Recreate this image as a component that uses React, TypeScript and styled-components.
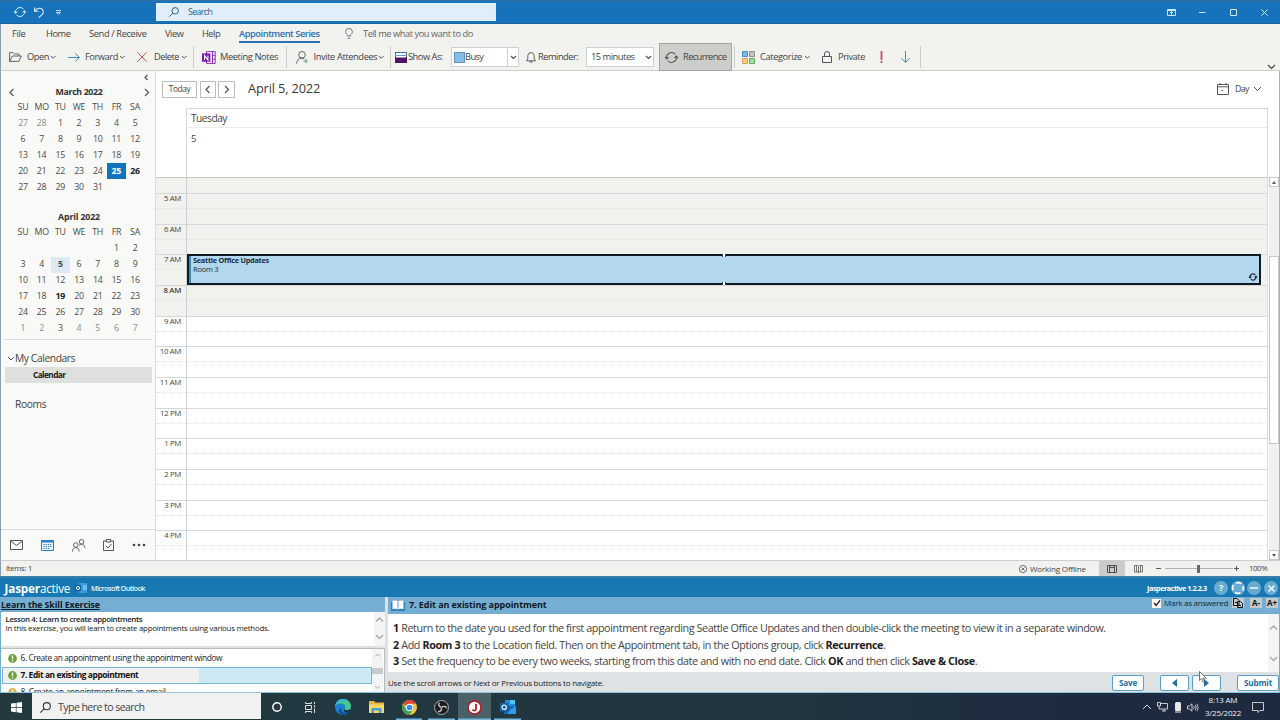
import React from "react";
import styled, { createGlobalStyle } from "styled-components";

const Global = createGlobalStyle`
  * { box-sizing: border-box; }
  html, body { margin: 0; padding: 0; }
  body { width: 1280px; height: 720px; overflow: hidden; font-family: "Open Sans", "Noto Sans", sans-serif; font-size: 9.3px; color: #444; }
`;

const Screen = styled.div`
  position: relative;
  display: flex;
  flex-direction: column;
  width: 1280px;
  height: 720px;
  background: #fff;
  overflow: hidden;
`;

const Txt = styled.span<{ $s?: number; $c?: string; $b?: number; $ls?: number; $w?: number }>`
  flex: none;
  white-space: nowrap;
  line-height: 1.2;
  font-size: ${(p) => p.$s ?? 9.3}px;
  color: ${(p) => p.$c ?? "#444"};
  font-weight: ${(p) => p.$b ?? 400};
  letter-spacing: ${(p) => p.$ls ?? 0}px;
  width: ${(p) => (p.$w ? p.$w + "px" : "auto")};
`;

const Spacer = styled.div<{ $w?: number }>`
  flex: ${(p) => (p.$w ? `0 0 ${p.$w}px` : "1 1 0")};
`;

const Svg = styled.svg`
  flex: none;
  display: block;
  fill: none;
  overflow: visible;
`;

/* Outlook title bar */
const TitleBar = styled.header`
  display: flex;
  align-items: center;
  height: 24px;
  flex: none;
  background: #1673bb;
  border-top: 1px solid #35719f;
  border-bottom: 1px solid #1c629c;
  padding-left: 14px;
`;
const SearchBox = styled.div`
  display: flex;
  align-items: center;
  width: 340px;
  height: 18px;
  padding-left: 13px;
  gap: 9px;
  background: #dfeef8;
`;

/* Ribbon */
const Ribbon = styled.div`
  flex: none;
  height: 47px;
  background: #f2f2ef;
  border-bottom: 1px solid #cfcfcf;
  border-left: 1px solid #8a9eae;
`;
const Tabs = styled.nav`
  display: flex;
  align-items: center;
  height: 19px;
  padding-left: 11px;
`;
const Tab = styled.div<{ $w: number }>`
  width: ${(p) => p.$w}px;
  flex: none;
  display: flex;
`;
const ActiveLabel = styled.div`
  width: 81px;
  height: 16px;
  margin-top: 2px;
  border-bottom: 2px solid #2a71b2;
`;
const Tools = styled.div`
  display: flex;
  align-items: center;
  height: 28px;
  padding-left: 8px;
`;
const Tool = styled.div<{ $w: number }>`
  display: flex;
  align-items: center;
  flex: none;
  width: ${(p) => p.$w}px;
`;
const IconSlot = styled.div<{ $w: number }>`
  flex: none;
  width: ${(p) => p.$w}px;
`;
const Divider = styled.div<{ $m: number }>`
  flex: none;
  width: 1px;
  height: 22px;
  background: #cbcbca;
  margin-right: ${(p) => p.$m}px;
`;
const Select = styled.div<{ $w: number; $split?: boolean }>`
  display: flex;
  align-items: center;
  flex: none;
  width: ${(p) => p.$w}px;
  height: 20px;
  padding-left: ${(p) => (p.$split ? 2 : 4)}px;
  background: #fff;
  border: 1px solid #cfcfcf;
`;
const SelectArrow = styled.div<{ $line?: boolean }>`
  display: flex;
  align-items: center;
  justify-content: center;
  width: 11px;
  height: 100%;
  margin-left: auto;
  border-left: 1px solid ${(p) => (p.$line ? "#cfcfcf" : "transparent")};
`;
const Swatch = styled.div`
  width: 11px;
  height: 11px;
  background: #84bce6;
  border: 1px solid #5f95bd;
`;
const Pressed = styled.div`
  display: flex;
  align-items: center;
  flex: none;
  width: 73px;
  height: 28px;
  padding-left: 5px;
  margin: 0 2px 0 5px;
  background: #cdcdc9;
  border: 1px solid #a3a3a0;
`;
const RibbonToggle = styled.div`
  align-self: flex-end;
  padding: 0 5px 3px 0;
`;

/* Main area */
const Main = styled.div`
  display: flex;
  flex: none;
  height: 489px;
`;
const Sidebar = styled.aside`
  display: flex;
  flex-direction: column;
  flex: none;
  width: 156px;
  background: #f9f9f7;
  border-left: 1px solid #8a9eae;
  border-right: 1px solid #dcdcdc;
`;
const CollapseRow = styled.div`
  display: flex;
  align-items: center;
  justify-content: flex-end;
  flex: none;
  height: 14px;
  padding: 0 8px 2px 0;
`;
const MonthHead = styled.div<{ $top: number }>`
  display: flex;
  align-items: center;
  justify-content: space-between;
  height: 14px;
  margin-top: ${(p) => p.$top}px;
  padding: 0 7px 0 9px;
`;
const MonthGrid = styled.div`
  display: grid;
  grid-template-columns: repeat(7, 18.7px);
  grid-template-rows: 16px;
  grid-auto-rows: 16px;
  margin-left: 12.6px;
`;
const DayCell = styled.div<{ $k?: string }>`
  display: flex;
  align-items: center;
  justify-content: center;
  font-size: 8.8px;
  letter-spacing: -0.25px;
  line-height: 1;
  color: ${(p) => (p.$k === "sel" ? "#fff" : p.$k === "dim" ? "#8b8b8b" : p.$k === "bold" ? "#222" : "#4a4a4a")};
  font-weight: ${(p) => (p.$k === "sel" || p.$k === "bold" || p.$k === "cur" ? 700 : 400)};
  background: ${(p) => (p.$k === "sel" ? "#0f74bb" : p.$k === "cur" ? "#dceaf6" : "transparent")};
`;
const SideRule = styled.div`
  height: 1px;
  background: #dadada;
  margin: 2px 3px 0 3px;
`;
const SideRow = styled.div<{ $top: number; $h: number; $pl: number; $on?: boolean }>`
  display: flex;
  align-items: center;
  flex: none;
  gap: 1px;
  height: ${(p) => p.$h}px;
  margin: ${(p) => p.$top}px 3px 0 4px;
  padding-left: ${(p) => p.$pl}px;
  background: ${(p) => (p.$on ? "#dfdfde" : "transparent")};
`;
const SideNav = styled.div`
  display: flex;
  align-items: center;
  gap: 18px;
  height: 31px;
  margin-top: auto;
  padding-left: 8.5px;
  border-top: 1px solid #d9d9d9;
`;

const Calendar = styled.section`
  display: flex;
  flex-direction: column;
  flex: 1;
  border-right: 1px solid #a7b4be;
`;
const CalHead = styled.div`
  display: flex;
  align-items: center;
  flex: none;
  height: 37px;
  padding: 0 18px 1px 6px;
`;
const Btn = styled.div<{ $w: number; $m: number }>`
  display: flex;
  align-items: center;
  justify-content: center;
  flex: none;
  width: ${(p) => p.$w}px;
  height: 17px;
  margin-right: ${(p) => p.$m}px;
  background: #fff;
  border: 1px solid #bdbdbd;
`;
const DayHeader = styled.div`
  flex: none;
  height: 69px;
  margin-left: 30px;
  margin-right: 11px;
  border: 1px solid #d6d6d6;
  border-bottom: none;
`;
const DayName = styled.div`
  display: flex;
  align-items: center;
  height: 19px;
  padding-left: 4px;
  border-bottom: 1px solid #ececec;
`;
const DayNumber = styled.div`
  display: flex;
  align-items: center;
  height: 22px;
  padding-left: 4px;
`;
const Schedule = styled.div`
  display: flex;
  flex: none;
  height: 383px;
`;
const Slots = styled.div`
  position: relative;
  flex: none;
  width: 1112px;
  overflow: hidden;
  border-top: 1px solid #c4c4c4;
  border-right: 1px solid #dcdcdc;
`;
const Slot = styled.div<{ $off?: boolean; $h: number }>`
  display: grid;
  grid-template-columns: 31px 1fr;
  height: ${(p) => p.$h}px;
  background: ${(p) => (p.$off ? "#f1f1ee" : "#fff")};
`;
const SlotCell = styled.div<{ $left?: boolean; $first?: boolean }>`
  display: flex;
  flex-direction: column;
  border-top: ${(p) => (p.$first ? "none" : "1px solid #d6d8d8")};
  border-right: ${(p) => (p.$left ? "1px solid #d0d2d2" : "none")};
  text-align: right;
  padding-right: ${(p) => (p.$left ? 5 : 0)}px;
`;
const HalfLine = styled.div`
  flex: none;
  height: 15px;
  margin-right: -5px;
  padding-right: 5px;
  border-bottom: 1px dotted #e0e2e2;
  line-height: 8px;
`;
const EventCard = styled.div`
  position: absolute;
  left: 31px;
  top: 76px;
  width: 1074px;
  height: 31px;
  display: flex;
  flex-direction: column;
  padding: 0.5px 0 0 2px;
  border: 2px solid #101a22;
  background: #b2d7ef;
  box-shadow: inset 2px 0 0 #2f8ccb;
`;
const EventLine = styled.div`
  height: 8.5px;
  display: flex;
  align-items: center;
  padding-left: 2px;
`;
const Handle = styled.i<{ $y: number }>`
  position: absolute;
  left: 533px;
  top: ${(p) => p.$y}px;
  width: 4px;
  height: 3px;
  background: #fff;
  border: 1px solid #23404c;
  border-width: 0 1px;
`;
const Repeat = styled.div`
  position: absolute;
  right: 2px;
  bottom: 2px;
`;
const Scroll = styled.div`
  display: flex;
  flex-direction: column;
  flex: none;
  width: 10px;
  margin-left: 1px;
  background: #eff0f0;
`;
const ScrollBtn = styled.div`
  display: flex;
  align-items: center;
  justify-content: center;
  height: 10px;
  flex: none;
  background: #fff;
  border: 1px solid #c8c8c8;
`;
const Thumb = styled.div`
  height: 188px;
  margin: 69px 0 auto;
  background: #fff;
  border: 1px solid #c8c8c8;
`;

const Status = styled.footer`
  display: flex;
  align-items: center;
  flex: none;
  height: 16px;
  padding-left: 5px;
  background: #f1f1ee;
  border-top: 1px solid #cfcfcf;
  border-left: 1px solid #8a9eae;
`;
const ViewBtn = styled.div`
  display: flex;
  align-items: center;
  justify-content: center;
  flex: none;
  width: 26px;
  height: 15px;
  background: #cbcbc9;
`;
const ZoomTrack = styled.div`
  display: flex;
  align-items: center;
  justify-content: center;
  flex: none;
  width: 68px;
  height: 8px;
  background: linear-gradient(#b3b3b3, #b3b3b3) center / 100% 1px no-repeat;
`;
const ZoomKnob = styled.div`
  width: 3px;
  height: 8px;
  background: #666;
`;

/* Jasperactive panel */
const Jasper = styled.section`
  display: flex;
  flex-direction: column;
  flex: none;
  height: 117px;
  border-top: 2px solid #3d7ea8;
  border-bottom: 1px solid #8fc4dd;
`;
const JHead = styled.div`
  display: flex;
  align-items: center;
  flex: none;
  height: 19px;
  padding: 1px 2px 0 4.5px;
  background: #1878b1;
`;
const Round = styled.div`
  display: flex;
  align-items: center;
  justify-content: center;
  width: 14px;
  height: 14px;
  margin-left: 2.6px;
  border-radius: 50%;
  background: #68acd4;
`;
const JBody = styled.div`
  display: flex;
  flex: 1;
  gap: 3px;
  background: #dfe2e4;
`;
const JLeft = styled.div`
  display: flex;
  flex-direction: column;
  width: 385px;
  border-left: 1px solid #73aed0;
`;
const JTitle = styled.div<{ $h: number }>`
  display: flex;
  align-items: center;
  flex: none;
  height: ${(p) => p.$h}px;
  background: #76aed3;
`;
const ExerciseTitle = styled.u`
  padding-top: 2px;
  font-size: 8.8px;
  font-weight: 700;
  letter-spacing: -0.1px;
  line-height: 1.2;
  color: #0c1a24;
`;
const LessonBox = styled.div`
  display: flex;
  justify-content: space-between;
  flex: none;
  height: 34px;
  background: #fff;
`;
const LessonText = styled.div`
  display: flex;
  flex-direction: column;
  padding: 3px 0 0 4.5px;
`;
const TextLine = styled.div<{ $h: number }>`
  display: flex;
  align-items: center;
  height: ${(p) => p.$h}px;
`;
const Arrows = styled.div<{ $p: string }>`
  display: flex;
  flex-direction: column;
  align-items: center;
  justify-content: space-between;
  flex: none;
  width: 11px;
  padding: ${(p) => p.$p};
  background: #f3f4f5;
`;
const TaskList = styled.div`
  display: flex;
  flex: none;
  height: 44px;
  margin-top: 2px;
  overflow: hidden;
  background: #fff;
  border: 1px solid #b7bcc0;
  border-left: none;
  border-bottom: none;
`;
const TaskRows = styled.div`
  width: 371px;
  padding-top: 1px;
`;
const TaskRow = styled.div<{ $on?: boolean }>`
  display: flex;
  align-items: center;
  gap: 3.5px;
  height: 17px;
  margin-left: 1px;
  padding-left: 5px;
  background: ${(p) => (p.$on ? "linear-gradient(90deg, #f0f0f0 0 196px, #cdeaf4 196px)" : "none")};
  border: 1px solid ${(p) => (p.$on ? "#6fbbd4" : "transparent")};
`;
const Grip = styled.div`
  width: 11px;
  height: 6px;
  background: #c7c9cb;
`;
const JRight = styled.div`
  display: flex;
  flex-direction: column;
  flex: 1;
  border-right: 1px solid #73aed0;
`;
const Check = styled.div`
  display: flex;
  align-items: center;
  justify-content: center;
  width: 9px;
  height: 9px;
  background: #fff;
`;
const TinyBtn = styled.div<{ $m: number }>`
  display: flex;
  align-items: center;
  justify-content: center;
  width: 12px;
  height: 10px;
  margin-left: ${(p) => p.$m}px;
  background: #c3c9cd;
`;
const MarkRow = styled.div`
  display: flex;
  align-items: center;
  height: 12px;
  margin-bottom: 5px;
`;
const StepsBox = styled.div`
  display: flex;
  justify-content: space-between;
  flex: none;
  height: 58px;
  background: #fff;
`;
const Steps = styled.div`
  padding: 5px 0 0 5px;
`;
const Step = styled.div<{ $ls: number }>`
  height: 16.6px;
  line-height: 17px;
  font-size: 10.8px;
  letter-spacing: ${(p) => p.$ls}px;
  color: #444;
  white-space: nowrap;
  b { color: #222; }
`;
const JFoot = styled.div`
  display: flex;
  align-items: center;
  flex: 1;
  padding-top: 2px;
`;
const JBtn = styled.div<{ $w: number; $m: number }>`
  display: flex;
  align-items: center;
  justify-content: center;
  flex: none;
  width: ${(p) => p.$w}px;
  height: 16px;
  margin-right: ${(p) => p.$m}px;
  background: #fff;
  border: 1px solid #5b9fc4;
  border-radius: 2px;
`;

/* Windows taskbar */
const Taskbar = styled.div`
  display: flex;
  align-items: stretch;
  flex: none;
  height: 27px;
  background: linear-gradient(90deg, #23393f 0%, #21363f 60%, #1d2a40 85%);
`;
const StartBtn = styled.div`
  display: flex;
  align-items: center;
  justify-content: center;
  width: 32px;
  padding-top: 1px;
`;
const TaskSearch = styled.div`
  display: flex;
  align-items: center;
  gap: 7px;
  width: 229px;
  height: 26px;
  padding: 2px 0 0 8px;
  background: #f1f1f1;
`;
const TaskApp = styled.div<{ $open?: boolean; $on?: boolean }>`
  display: flex;
  align-items: center;
  justify-content: center;
  flex: none;
  width: 32.9px;
  padding-top: 1px;
  background: ${(p) => (p.$on ? "#4b6168" : "transparent")};
  box-shadow: ${(p) => (p.$open ? "inset 0 -2px 0 -0.5px #76b9e0" : "none")};
  border: 0 solid transparent;
  border-width: 0 ${(p) => (p.$on ? 0 : 3)}px;
`;
const Tray = styled.div`
  display: flex;
  align-items: center;
  margin-left: auto;
  padding-top: 1px;
`;
const Clock = styled.div`
  display: flex;
  flex-direction: column;
  align-items: center;
  width: 46px;
  margin-top: -1px;
`;
const Cursor = styled.div`
  position: absolute;
  left: 1199px;
  top: 671px;
`;

const Chev = ({ d = "down", w = 6, c = "#555", s = 1 }: { d?: string; w?: number; c?: string; s?: number }) => {
  const h = w / 2;
  const vertical = d === "down" || d === "up";
  const path =
    d === "down" ? `M0 0L${h} ${h}L${w} 0` : d === "up" ? `M0 ${h}L${h} 0L${w} ${h}` : d === "left" ? `M${h} 0L0 ${h}L${h} ${w}` : `M0 0L${h} ${h}L0 ${w}`;
  return (
    <Svg width={vertical ? w : h} height={vertical ? h : w} stroke={c} strokeWidth={s}>
      <path d={path} />
    </Svg>
  );
};

const Lens = ({ s = 10, c = "#2b6590" }) => (
  <Svg width={s} height={s} viewBox="0 0 10 10" stroke={c} strokeWidth="1">
    <circle cx="6.2" cy="3.8" r="3.2" />
    <path d="M3.9 6.1L.3 9.7" />
  </Svg>
);

const Cycle = ({ s = 12, c = "#555", w = 1 }) => (
  <Svg width={s} height={s} viewBox="0 0 12 12" stroke={c} strokeWidth={w}>
    <path d="M1.6 7.2A4.6 4.6 0 0 1 9.5 3M10.4 4.8A4.6 4.6 0 0 1 2.5 9M0 5.4L1.6 7.4L3.4 5.6M12 6.6L10.4 4.6L8.6 6.4" />
  </Svg>
);

const DOW = ["SU", "MO", "TU", "WE", "TH", "FR", "SA"];
type Cell = [string, string?];
const range = (a: number, b: number, k?: string): Cell[] => Array.from({ length: b - a + 1 }, (_, i) => [String(a + i), k]);

const march: Cell[] = [...range(27, 28, "dim"), ...range(1, 24), ["25", "sel"], ["26", "bold"], ...range(27, 31)];
const april: Cell[] = [
  ...Array.from({ length: 5 }, () => [""] as Cell),
  ...range(1, 4), ["5", "cur"], ...range(6, 18), ["19", "bold"], ...range(20, 30),
  ...range(1, 2, "dim"), ["3"], ...range(4, 7, "dim"),
];

const Month = ({ days }: { days: Cell[] }) => (
  <MonthGrid>
    {DOW.map((d) => <DayCell key={d}>{d}</DayCell>)}
    {days.map(([t, k], i) => <DayCell key={i} $k={k}>{t}</DayCell>)}
  </MonthGrid>
);

const HOURS = ["5 AM", "6 AM", "7 AM", "8 AM", "9 AM", "10 AM", "11 AM", "12 PM", "1 PM", "2 PM", "3 PM", "4 PM"];

const Alert = ({ c }: { c: string }) => (
  <Svg width="9" height="9" viewBox="0 0 9 9">
    <circle cx="4.5" cy="4.5" r="4.4" fill={c} />
    <path d="M4.5 1.6V5.2M4.5 6.2V7.4" stroke="#fff" strokeWidth="1.3" />
  </Svg>
);

export default function App() {
  return (
    <Screen>
      <Global />
      <TitleBar>
        <Cycle s={12} c="#d7eafa" />
        <Spacer $w={8} />
        <Svg width="10" height="11" viewBox="0 0 10 11" stroke="#d7eafa" strokeWidth="1.1">
          <path d="M.6 .6V4.2H4.4M.8 4C2.4 1.6 4.8 .8 7 1.6C9.8 2.8 9.8 5.6 8 7.6L4.8 10.6" />
        </Svg>
        <Spacer $w={12} />
        <Svg width="5" height="5" viewBox="0 0 5 5" stroke="#d7eafa" strokeWidth=".9">
          <path d="M0 .5H5M.4 2.4H4.6L2.5 4.5Z" />
        </Svg>
        <Spacer $w={95} />
        <SearchBox>
          <Lens s={10} />
          <Txt $s={8.8} $c="#2b6590" $ls={-0.6}>Search</Txt>
        </SearchBox>
        <Spacer />
        <Svg width="9" height="7" stroke="#cfe6f8"><path d="M.5 .5H8.5V6.5H.5ZM.5 1.5H8.5M4.5 6V2.6M2.9 4L4.5 2.5L6.1 4" /></Svg>
        <Spacer $w={23} />
        <Svg width="7" height="7" stroke="#cfe6f8"><path d="M0 3.5H6.5" /></Svg>
        <Spacer $w={24} />
        <Svg width="7" height="7" stroke="#cfe6f8"><path d="M.5 .5H6.5V6.5H.5Z" /></Svg>
        <Spacer $w={24} />
        <Svg width="7" height="7" stroke="#cfe6f8"><path d="M.3 .3L6.7 6.7M6.7 .3L.3 6.7" /></Svg>
        <Spacer $w={12} />
      </TitleBar>

      <Ribbon>
        <Tabs>
          <Tab $w={34}><Txt $ls={-0.3}>File</Txt></Tab>
          <Tab $w={43}><Txt $ls={-0.45}>Home</Txt></Tab>
          <Tab $w={76}><Txt $ls={-0.38}>Send / Receive</Txt></Tab>
          <Tab $w={37}><Txt $ls={-0.45}>View</Txt></Tab>
          <Tab $w={37}><Txt $ls={-0.5}>Help</Txt></Tab>
          <Tab $w={106}><ActiveLabel><Txt $c="#2a71b2" $b={600} $ls={-0.46}>Appointment Series</Txt></ActiveLabel></Tab>
          <Svg width="8" height="11" viewBox="0 0 8 11" stroke="#666" strokeWidth=".9">
            <path d="M2.4 8V6.8C1.2 5.8 .6 4.9 .6 3.9A3.4 3.4 0 0 1 7.4 3.9C7.4 4.9 6.8 5.8 5.6 6.8V8ZM2.6 10.3H5.4" />
          </Svg>
          <Spacer $w={10} />
          <Txt $c="#666" $ls={-0.46}>Tell me what you want to do</Txt>
        </Tabs>
        <Tools>
          <Tool $w={59}>
            <IconSlot $w={18}>
              <Svg width="13" height="10" viewBox="0 0 13 10" stroke="#555" strokeWidth=".9"><path d="M.6 9.4V.6H4L5.4 2H10V4M.6 9.4L3.4 4H12.4L9.8 9.4Z" /></Svg>
            </IconSlot>
            <Txt $w={24} $ls={-0.5}>Open</Txt><Chev w={4.5} />
          </Tool>
          <Tool $w={69}>
            <IconSlot $w={17}>
              <Svg width="12" height="9" stroke="#3b87c4"><path d="M0 4.5H11.4M7.2 .4L11.4 4.5L7.2 8.6" /></Svg>
            </IconSlot>
            <Txt $w={35} $ls={-0.45}>Forward</Txt><Chev w={4.5} />
          </Tool>
          <Tool $w={56}>
            <IconSlot $w={17}>
              <Svg width="10" height="10" stroke="#d0545c"><path d="M.3 .3L9.7 9.7M9.7 .3L.3 9.7" /></Svg>
            </IconSlot>
            <Txt $w={28} $ls={-0.5}>Delete</Txt><Chev w={4.5} />
          </Tool>
          <Divider $m={8} />
          <Tool $w={84}>
            <IconSlot $w={18}>
              <Svg width="14" height="13" viewBox="0 0 14 13">
                <path d="M4.5 .6H13.2V12.4H4.5ZM10.5 .6V12.4M10.5 4.3H13.2M10.5 8.2H13.2" stroke="#8a2fa8" fill="#fff" />
                <rect y="2.4" width="8.4" height="8.4" fill="#7719aa" />
                <path d="M2.5 9V4.4L5.9 9V4.4" stroke="#fff" strokeWidth="1.1" />
              </Svg>
            </IconSlot>
            <Txt $ls={-0.4}>Meeting Notes</Txt>
          </Tool>
          <Divider $m={9} />
          <Tool $w={94}>
            <IconSlot $w={17.5}>
              <Svg width="13" height="13" viewBox="0 0 13 13" stroke="#555" strokeWidth=".9">
                <circle cx="6" cy="3.8" r="3.3" /><path d="M.6 12.6C.9 9.3 2.6 7.2 5.4 7.2C6.7 7.2 7.6 7.6 8.2 8.2" />
                <path d="M9.8 7.8V12.4M7.5 10.1H12.1" stroke="#4ba36c" />
              </Svg>
            </IconSlot>
            <Txt $w={65} $ls={-0.4}>Invite Attendees</Txt><Chev w={4.5} />
          </Tool>
          <Divider $m={4} />
          <Tool $w={56}>
            <IconSlot $w={13}>
              <Svg width="12" height="11"><rect x=".5" y=".5" width="11" height="10" fill="#fff" stroke="#3f6d9b" /><path d="M0 3.5H12" stroke="#5da0d6" /><path d="M0 5.5H12V11H0Z" fill="#4b1467" /></Svg>
            </IconSlot>
            <Txt $ls={-0.5}>Show As:</Txt>
          </Tool>
          <Select $w={68} $split>
            <Swatch /><Txt $ls={-0.6}>Busy</Txt><SelectArrow $line><Chev w={5} s={1.2} /></SelectArrow>
          </Select>
          <Spacer $w={7} />
          <Tool $w={60}>
            <IconSlot $w={12}>
              <Svg width="10" height="11" viewBox="0 0 10 11" stroke="#555" strokeWidth=".9"><path d="M.5 8.8H9.5L8.2 6.8V3.8A3.2 3.2 0 0 0 1.8 3.8V6.8ZM3.7 9A1.3 1.3 0 0 0 6.3 9" /></Svg>
            </IconSlot>
            <Txt $ls={-0.5}>Reminder:</Txt>
          </Tool>
          <Select $w={68}>
            <Txt $ls={-0.48}>15 minutes</Txt><SelectArrow><Chev w={5} s={1.2} /></SelectArrow>
          </Select>
          <Pressed>
            <IconSlot $w={18}><Cycle s={13} /></IconSlot>
            <Txt $ls={-0.6}>Recurrence</Txt>
          </Pressed>
          <Divider $m={7} />
          <Tool $w={80}>
            <IconSlot $w={18}>
              <Svg width="13" height="13">
                <path d="M.5 .5H5.5V5.5H.5Z" fill="#7db6e2" stroke="#4a8fc4" /><path d="M7.5 .5H12.5V5.5H7.5Z" fill="#c4c4c4" stroke="#8f8f8f" />
                <path d="M.5 7.5H5.5V12.5H.5Z" fill="#f8cf8a" stroke="#d9a24a" /><path d="M7.5 7.5H12.5V12.5H7.5Z" fill="#a3dba3" stroke="#5fb065" />
              </Svg>
            </IconSlot>
            <Txt $w={45} $ls={-0.4}>Categorize</Txt><Chev w={4.5} />
          </Tool>
          <Tool $w={58}>
            <IconSlot $w={16}>
              <Svg width="10" height="12" viewBox="0 0 10 12" stroke="#555"><path d="M.5 5.5H9.5V11.5H.5ZM2.5 5.5V3A2.5 2.5 0 0 1 7.5 3V5.5" /></Svg>
            </IconSlot>
            <Txt $ls={-0.45}>Private</Txt>
          </Tool>
          <Svg width="3" height="12"><path d="M1.5 0V9M1.5 10V12" stroke="#c9525c" strokeWidth="1.8" /></Svg>
          <Spacer $w={18} />
          <Svg width="9" height="12" stroke="#3c8fb5"><path d="M4.5 0V11.3M.3 7.2L4.5 11.4L8.7 7.2" /></Svg>
          <Spacer $w={10} />
          <Divider $m={0} />
          <Spacer />
          <RibbonToggle><Chev w={7} s={1.2} c="#444" /></RibbonToggle>
        </Tools>
      </Ribbon>

      <Main>
        <Sidebar>
          <CollapseRow><Chev d="left" w={5} s={1.2} /></CollapseRow>
          <MonthHead $top={0}>
            <Chev d="left" w={7} s={1.2} /><Txt $b={700} $c="#333" $s={8.8} $ls={-0.35}>March 2022</Txt><Chev d="right" w={7} s={1.2} />
          </MonthHead>
          <Month days={march} />
          <MonthHead $top={15.5}>
            <Spacer /><Txt $b={700} $c="#333" $s={8.8} $ls={-0.15}>April 2022</Txt><Spacer />
          </MonthHead>
          <Month days={april} />
          <SideRule />
          <SideRow $top={11} $h={16} $pl={3}><Chev w={6} /><Txt $s={10.3} $ls={-0.42}>My Calendars</Txt></SideRow>
          <SideRow $top={0} $h={16} $pl={28} $on><Txt $s={8.3} $b={700} $c="#222" $ls={-0.6}>Calendar</Txt></SideRow>
          <SideRow $top={14} $h={16} $pl={10}><Txt $s={10.3} $ls={-0.4}>Rooms</Txt></SideRow>
          <SideNav>
            <Svg width="13" height="10" stroke="#555"><path d="M.5 .5H12.5V9.5H.5ZM.5 1L6.5 5.4L12.5 1" /></Svg>
            <Svg width="13" height="12" stroke="#2f7fc0">
              <path d="M.5 1.5H12.5V11.5H.5Z" fill="#e6f1fa" /><path d="M0 2.5H13" strokeWidth="2" /><path d="M2.5 5.5H11M2.5 7.5H11M2.5 9.5H9" strokeDasharray="1.2 1" />
            </Svg>
            <Svg width="13" height="13" viewBox="0 0 13 13" stroke="#555" strokeWidth=".9">
              <circle cx="3.8" cy="6" r="2.3" /><path d="M.5 12.5C.5 9.8 2 8.6 3.8 8.6S7.1 9.8 7.1 12.5" />
              <circle cx="9.6" cy="2.8" r="2.3" /><path d="M7 6.6C7.6 5.7 8.6 5.2 9.6 5.2C11.4 5.2 12.6 6.4 12.8 8.8" />
            </Svg>
            <Svg width="11" height="12" stroke="#555"><path d="M3 2H.5V11.5H10.5V2H8M3.3 .5H7.7V3H3.3ZM3 7L5 9L8.4 5" /></Svg>
            <Svg width="14" height="4"><circle cx="2" cy="2" r="1.3" fill="#444" /><circle cx="7" cy="2" r="1.3" fill="#444" /><circle cx="12" cy="2" r="1.3" fill="#444" /></Svg>
          </SideNav>
        </Sidebar>

        <Calendar>
          <CalHead>
            <Btn $w={35} $m={3}><Txt $s={8.4} $ls={-0.4}>Today</Txt></Btn>
            <Btn $w={16} $m={2}><Chev d="left" w={7} s={1.2} /></Btn>
            <Btn $w={17} $m={13}><Chev d="right" w={7} s={1.2} /></Btn>
            <Txt $s={12.8} $b={500} $c="#3a3a3a" $ls={-0.15}>April 5, 2022</Txt>
            <Spacer />
            <Svg width="12" height="12" stroke="#555"><path d="M.5 1.5H11.5V11.5H.5ZM.5 3.8H11.5M3 0V2M9 0V2M4.5 7.5H6" /></Svg>
            <Spacer $w={6} />
            <Txt $w={19} $s={8.8} $ls={-0.6}>Day</Txt>
            <Chev w={7} />
          </CalHead>
          <DayHeader>
            <DayName><Txt $s={10.2} $ls={-0.5}>Tuesday</Txt></DayName>
            <DayNumber><Txt $s={9.5}>5</Txt></DayNumber>
          </DayHeader>
          <Schedule>
            <Slots>
              <Slot $off $h={15}><SlotCell $left $first /><SlotCell $first /></Slot>
              {HOURS.map((h, i) => (
                <Slot key={h} $off={i < 4} $h={30.67}>
                  <SlotCell $left><HalfLine><Txt $s={7.8} $b={h === "8 AM" ? 600 : 400} $ls={-0.35}>{h}</Txt></HalfLine></SlotCell>
                  <SlotCell><HalfLine /></SlotCell>
                </Slot>
              ))}
              <EventCard>
                <EventLine><Txt $s={7.3} $b={700} $c="#1c2c38" $ls={-0.25}>Seattle Office Updates</Txt></EventLine>
                <EventLine><Txt $s={7.5} $c="#1c2c38" $ls={-0.25}>Room 3</Txt></EventLine>
                <Handle $y={-2} /><Handle $y={26} />
                <Repeat><Cycle s={8} c="#223" w={1.6} /></Repeat>
              </EventCard>
            </Slots>
            <Scroll>
              <ScrollBtn><Svg width="4" height="3"><path d="M0 3L2 0L4 3Z" fill="#555" /></Svg></ScrollBtn>
              <Thumb />
              <ScrollBtn><Svg width="4" height="3"><path d="M0 0L2 3L4 0Z" fill="#555" /></Svg></ScrollBtn>
            </Scroll>
          </Schedule>
        </Calendar>
      </Main>

      <Status>
        <Txt $s={7.6} $ls={-0.25}>Items: 1</Txt>
        <Spacer />
        <Svg width="8" height="8" stroke="#555" strokeWidth=".8"><circle cx="4" cy="4" r="3.7" /><path d="M2.4 2.4L5.6 5.6M5.6 2.4L2.4 5.6" /></Svg>
        <Spacer $w={3} />
        <Txt $s={8} $w={69} $ls={-0.15}>Working Offline</Txt>
        <ViewBtn><Svg width="10" height="8" stroke="#444"><path d="M.5 .5H9.5V7.5H.5ZM2.5 .5V7.5M7.5 .5V7.5M2.5 2.5H7.5" strokeWidth=".9" /></Svg></ViewBtn>
        <Spacer $w={9} />
        <Svg width="9" height="8" stroke="#555" strokeWidth=".8"><path d="M.5 .5H3.6L4.5 1.3L5.4 .5H8.5V7H5.4L4.5 7.8L3.6 7H.5ZM4.5 1.3V7.8M2.5 1V7M6.5 1V7" /></Svg>
        <Spacer $w={13} />
        <Svg width="5" height="5" stroke="#555"><path d="M0 2.5H5" /></Svg>
        <Spacer $w={3.5} />
        <ZoomTrack><ZoomKnob /></ZoomTrack>
        <Spacer $w={1.5} />
        <Svg width="5" height="5" stroke="#555"><path d="M0 2.5H5M2.5 0V5" /></Svg>
        <Spacer $w={10} />
        <Txt $s={7.8} $w={31} $ls={-0.4}>100%</Txt>
      </Status>

      <Jasper>
        <JHead>
          <Txt $s={11.7} $b={700} $c="#fff" $ls={-0.15}>Jasper</Txt>
          <Txt $s={11.7} $c="#fff" $w={35} $ls={-0.25}>active</Txt>
          <Svg width="12" height="10"><path d="M4 0H12V10H4Z" fill="#3b9ad9" /><path d="M8 2H12V7H8Z" fill="#6fc0ee" /><path d="M0 2H6V8H0Z" fill="#0f5fa0" /><circle cx="3" cy="5" r="1.6" stroke="#fff" /></Svg>
          <Spacer $w={4} />
          <Txt $s={7.3} $b={600} $c="#e8f3fa" $ls={-0.58}>Microsoft Outlook</Txt>
          <Spacer />
          <Txt $s={7.3} $b={700} $c="#fff" $ls={-0.5}>Jasperactive 1.2.2.3</Txt>
          <Spacer $w={5} />
          <Round><Txt $s={9} $b={700} $c="#fff">?</Txt></Round>
          <Round><Svg width="12" height="12"><circle cx="6" cy="6" r="5.4" stroke="#fff" strokeWidth="1.7" strokeDasharray="5.5 2.98" strokeDashoffset="2.7" /></Svg></Round>
          <Round><Svg width="8" height="2"><path d="M0 1H8" stroke="#fff" strokeWidth="1.4" /></Svg></Round>
          <Round><Svg width="7" height="7"><path d="M.5 .5L6.5 6.5M6.5 .5L.5 6.5" stroke="#fff" strokeWidth="1.3" /></Svg></Round>
        </JHead>
        <JBody>
          <JLeft>
            <JTitle $h={15}><ExerciseTitle>Learn the Skill Exercise</ExerciseTitle></JTitle>
            <LessonBox>
              <LessonText>
                <TextLine $h={8.5}><Txt $s={7.9} $b={600} $c="#222" $ls={-0.37}>Lesson 4: Learn to create appointments</Txt></TextLine>
                <TextLine $h={10}><Txt $s={7.9} $c="#222" $ls={-0.25}>In this exercise, you will learn to create appointments using various methods.</Txt></TextLine>
              </LessonText>
              <Arrows $p="6px 0 8px"><Chev d="up" w={7} c="#aaa" s={1.5} /><Chev w={7} c="#aaa" s={1.5} /></Arrows>
            </LessonBox>
            <TaskList>
              <TaskRows>
                <TaskRow><Alert c="#6ba23b" /><Txt $s={8.4} $c="#222" $ls={-0.41}>6. Create an appointment using the appointment window</Txt></TaskRow>
                <TaskRow $on><Alert c="#6ba23b" /><Txt $s={8.4} $b={700} $c="#111" $ls={-0.41}>7. Edit an existing appointment</Txt></TaskRow>
                <TaskRow><Alert c="#e3b23c" /><Txt $s={8.4} $c="#222" $ls={-0.3}>8. Create an appointment from an email</Txt></TaskRow>
              </TaskRows>
              <Arrows $p="5px 0 4px"><Chev d="up" w={5} c="#aaa" /><Grip /><Chev w={5} c="#aaa" /></Arrows>
            </TaskList>
          </JLeft>
          <JRight>
            <JTitle $h={17}>
              <Spacer $w={3} />
              <Svg width="14" height="11"><path d="M0 2H14V11H0Z" fill="#2c83ba" /><path d="M1.5 1C3.5 .3 5.5 .5 6.6 1.3V9.6C5.5 8.8 3.5 8.6 1.5 9.3ZM12.5 1C10.5 .3 8.5 .5 7.4 1.3V9.6C8.5 8.8 10.5 8.6 12.5 9.3Z" fill="#fff" /></Svg>
              <Spacer $w={4} />
              <Txt $s={9} $b={700} $c="#0c1a24" $ls={-0.08}>7. Edit an existing appointment</Txt>
              <Spacer />
              <MarkRow>
                <Check><Svg width="6" height="6"><path d="M0 3L2.2 5.4L6 .3" stroke="#222" strokeWidth="1.4" /></Svg></Check>
                <Spacer $w={3} />
                <Txt $s={8} $c="#0f2a3c" $w={67} $ls={-0.25}>Mark as answered</Txt>
                <TinyBtn $m={1}><Svg width="10" height="10" stroke="#111"><path d="M.5 .5H4L6 2.5V7.5H.5ZM4.5 3.5H7.5L9.5 5.5V9.5H4.5Z" fill="#c3c9cd" /><path d="M2 4.5H4M6 7.5H8" /></Svg></TinyBtn>
                <TinyBtn $m={6}><Txt $s={8} $b={700} $c="#111">A-</Txt></TinyBtn>
                <TinyBtn $m={4}><Txt $s={8} $b={700} $c="#111">A+</Txt></TinyBtn>
                <Spacer $w={1} />
              </MarkRow>
            </JTitle>
            <StepsBox>
              <Steps>
                <Step $ls={-0.42}><b>1</b> Return to the date you used for the first appointment regarding Seattle Office Updates and then double-click the meeting to view it in a separate window.</Step>
                <Step $ls={-0.39}><b>2</b> Add <b>Room 3</b> to the Location field. Then on the Appointment tab, in the Options group, click <b>Recurrence</b>.</Step>
                <Step $ls={-0.38}><b>3</b> Set the frequency to be every two weeks, starting from this date and with no end date. Click <b>OK</b> and then click <b>Save &amp; Close</b>.</Step>
              </Steps>
              <Arrows $p="12px 0 12px"><Chev d="up" w={7} c="#aaa" s={1.5} /><Chev w={7} c="#aaa" s={1.5} /></Arrows>
            </StepsBox>
            <JFoot>
              <Txt $s={8} $c="#222" $ls={-0.21}>Use the scroll arrows or Next or Previous buttons to navigate.</Txt>
              <Spacer />
              <JBtn $w={32} $m={16}><Txt $s={8.2} $b={700} $c="#256f9f" $ls={-0.2}>Save</Txt></JBtn>
              <JBtn $w={29} $m={3}><Svg width="5" height="8"><path d="M5 0V8L0 4Z" fill="#1f6e9f" /></Svg></JBtn>
              <JBtn $w={29} $m={16}><Svg width="5" height="8"><path d="M0 0V8L5 4Z" fill="#1f6e9f" /></Svg></JBtn>
              <JBtn $w={42} $m={0}><Txt $s={8.2} $b={700} $c="#256f9f" $ls={-0.2}>Submit</Txt></JBtn>
            </JFoot>
          </JRight>
        </JBody>
      </Jasper>

      <Taskbar>
        <StartBtn><Svg width="11" height="11"><path d="M0 1.6L4.8 .9V5.2H0ZM5.5 .8L11 0V5.2H5.5ZM0 5.9H4.8V10.2L0 9.5ZM5.5 5.9H11V11L5.5 10.3Z" fill="#fff" /></Svg></StartBtn>
        <TaskSearch><Lens s={11} c="#333" /><Txt $s={10.6} $c="#444" $ls={-0.58}>Type here to search</Txt></TaskSearch>
        <TaskApp><Svg width="10" height="10"><circle cx="5" cy="5" r="4.2" stroke="#fff" strokeWidth="1.4" /></Svg></TaskApp>
        <TaskApp>
          <Svg width="11" height="11" stroke="#ddd"><path d="M.5 0V1.5H6.5V0M.5 11V9.5H6.5V11M.5 3.5H6.5V7.5H.5ZM9.5 0V2M9.5 3V5.5M9.5 6.5V11" /></Svg>
        </TaskApp>
        <TaskApp>
          <Svg width="16" height="16" viewBox="0 0 16 16">
            <circle cx="8" cy="8" r="8" fill="#1b7fd0" />
            <path d="M.6 5.2C2 1.8 4.8 0 8 0C12.6 0 16 3.4 16 7.2C16 9.8 14 11.2 11.8 11.2C10 11.2 9 10.4 9.6 9.6C11.4 7.4 9.4 4.6 6.2 4.6C3.6 4.6 1.6 5.4 .3 7Z" fill="#46c98a" />
            <path d="M.6 5.2C2 1.8 4.8 0 8 0C10 0 11.6 .6 13 1.6C9 2.6 3 2.6 .3 7Z" fill="#35b8d8" />
            <path d="M6 8C5 11 7.6 14.6 12.6 14.4C11 15.6 9.4 16 8 16C4 16 2.6 11 6 8Z" fill="#0d4f9e" />
            <path d="M9.6 9.6C9 10.4 10 11.2 11.8 11.2C13.4 11.2 15 10.4 15.6 9.4C15 12 13.6 13.6 12.6 14.4C9.4 13.8 8 11.6 9.6 9.6Z" fill="#21363f" />
          </Svg>
        </TaskApp>
        <TaskApp>
          <Svg width="15" height="12"><path d="M0 0H5L6.5 1.5H15V12H0Z" fill="#e8b33a" /><path d="M0 3.5H15V12H0Z" fill="#fbd766" /><path d="M2.5 7H12.5V12H10V9.5H5V12H2.5Z" fill="#4a9fd8" /></Svg>
        </TaskApp>
        <TaskApp $open>
          <Svg width="15" height="15" viewBox="0 0 16 16">
            <circle cx="8" cy="8" r="8" fill="#f3c537" />
            <path d="M8 8L1.1 4A8 8 0 0 1 14.9 4H8Z" fill="#db4437" /><path d="M1.1 4A8 8 0 0 0 8 16L11.5 10L4.5 10Z" fill="#3f9e57" />
            <circle cx="8" cy="8" r="3.9" fill="#fff" /><circle cx="8" cy="8" r="3" fill="#4285f4" />
          </Svg>
        </TaskApp>
        <TaskApp $open>
          <Svg width="15" height="15" viewBox="0 0 15 15"><circle cx="7.5" cy="7.5" r="7" fill="#1c1c1e" stroke="#b9bcbe" strokeWidth=".9" /><path d="M7.2 7.2C4.6 6.6 4 4.4 5.4 2.6M7.6 7.4C9.6 5.6 12 6.2 12.6 8.4M7.4 7.8C8 10.4 6.2 12 4 11.4" stroke="#c9cccd" strokeWidth="1.4" /></Svg>
        </TaskApp>
        <TaskApp $open $on>
          <Svg width="15" height="15"><circle cx="7.5" cy="7.5" r="6.6" fill="#fff" stroke="#b0202c" strokeWidth="1.8" /><path d="M9 3.8V8.8C9 11 6 11.2 5.6 9.4" stroke="#b0202c" strokeWidth="1.8" /></Svg>
        </TaskApp>
        <TaskApp $open>
          <Svg width="16" height="14"><path d="M5 0H15V8H5Z" fill="#1a8fe0" /><path d="M10 0H15V4H10Z" fill="#4fc3f7" /><path d="M4 6H16V14H4Z" fill="#1267b4" /><path d="M10 10L16 6V14H7Z" fill="#2f9ce6" /><path d="M0 3H8.5V11.5H0Z" fill="#0f5fae" /><circle cx="4.2" cy="7.2" r="2.2" stroke="#fff" strokeWidth="1.2" /></Svg>
        </TaskApp>
        <Tray>
          <Chev d="up" w={8} c="#ddd" />
          <Spacer $w={6} />
          <Svg width="11" height="10" stroke="#ddd" strokeWidth=".9"><path d="M3 1.5H10.5V7H3M.5 .5H3.5V4H.5ZM2 4V7H3M5 9H9M7 7V9" /></Svg>
          <Spacer $w={6.5} />
          <Svg width="6" height="11"><rect x="0" y="0" width="6" height="9" rx="1.5" fill="#e8e8e8" /><path d="M0 10H6" stroke="#e8e8e8" /></Svg>
          <Spacer $w={6.5} />
          <Svg width="11" height="9" stroke="#ddd" strokeWidth=".9"><path d="M.5 3H2.5L5 .8V8.2L2.5 6H.5ZM6.6 3C7.3 4 7.3 5 6.6 6M8.2 1.8C9.4 3.4 9.4 5.6 8.2 7.2M9.8 .8C11.4 3 11.4 6 9.8 8.2" /></Svg>
          <Spacer $w={2} />
          <Clock>
            <TextLine $h={12.5}><Txt $s={8} $c="#eee" $ls={-0.2}>8:13 AM</Txt></TextLine>
            <TextLine $h={12.5}><Txt $s={8} $c="#eee" $ls={-0.2}>3/25/2022</Txt></TextLine>
          </Clock>
          <Spacer $w={6} />
          <Svg width="12" height="11" stroke="#ddd" strokeWidth=".9"><path d="M.5 .5H11.5V8.5H8L6 10.5V8.5H.5Z" /></Svg>
          <Spacer $w={16} />
        </Tray>
      </Taskbar>

      <Cursor>
        <Svg width="8" height="12" viewBox="0 0 8 12"><path d="M.5 .5V9.5L2.6 7.6L4.2 11.2L5.6 10.6L4 7.2H7.2Z" fill="#fff" stroke="#444" strokeWidth=".7" /></Svg>
      </Cursor>
    </Screen>
  );
}
